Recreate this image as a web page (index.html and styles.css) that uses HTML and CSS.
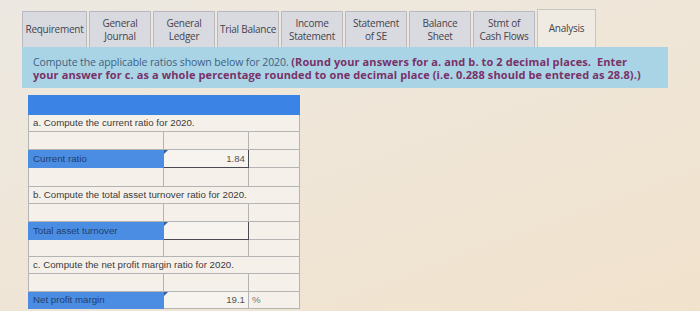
FILE: index.html
```html
<!DOCTYPE html>
<html>
<head>
<meta charset="utf-8">
<link rel="stylesheet" href="styles.css">
</head>
<body>
<div class="page">
  <div class="tabs">
    <div class="tab tab-first">Requirement</div>
    <div class="tab">General<br>Journal</div>
    <div class="tab">General<br>Ledger</div>
    <div class="tab">Trial Balance</div>
    <div class="tab">Income<br>Statement</div>
    <div class="tab">Statement<br>of SE</div>
    <div class="tab">Balance<br>Sheet</div>
    <div class="tab">Stmt of<br>Cash Flows</div>
    <div class="tab tab-active">Analysis</div>
  </div>
  <div class="instructions">
    <p class="line">Compute the applicable ratios shown below for 2020. <b>(Round your answers for a. and b. to 2 decimal places.&nbsp; Enter</b></p>
    <p class="line"><b>your answer for c. as a whole percentage rounded to one decimal place (i.e. 0.288 should be entered as 28.8).)</b></p>
  </div>
  <table class="ratios">
    <colgroup><col class="c1"><col class="c2"><col class="c3"></colgroup>
    <tr class="head"><td colspan="3"></td></tr>
    <tr class="q"><td colspan="3">a. Compute the current ratio for 2020.</td></tr>
    <tr class="blank"><td></td><td></td><td></td></tr>
    <tr class="ans"><td class="lbl">Current ratio</td><td class="val"><span class="mark"></span>1.84</td><td></td></tr>
    <tr class="blank tall"><td></td><td></td><td></td></tr>
    <tr class="q"><td colspan="3">b. Compute the total asset turnover ratio for 2020.</td></tr>
    <tr class="blank"><td></td><td></td><td></td></tr>
    <tr class="ans"><td class="lbl">Total asset turnover</td><td class="val"><span class="mark"></span></td><td></td></tr>
    <tr class="blank short"><td></td><td></td><td></td></tr>
    <tr class="q"><td colspan="3">c. Compute the net profit margin ratio for 2020.</td></tr>
    <tr class="blank"><td></td><td></td><td></td></tr>
    <tr class="ans short"><td class="lbl">Net profit margin</td><td class="val plain"><span class="mark"></span>19.1</td><td class="pct">%</td></tr>
  </table>
</div>
</body>
</html>
```
FILE: styles.css
```css
html, body {
  margin: 0;
  padding: 0;
}
body {
  width: 700px;
  height: 311px;
  overflow: hidden;
  background: linear-gradient(160deg, #ece8e1 0%, #efe6d8 45%, #f1e2cc 100%);
  font-family: "Open Sans", "DejaVu Sans", sans-serif;
}
.page {
  padding: 8px 0 0 22px;
}
.tabs {
  display: flex;
  align-items: flex-end;
  gap: 2px;
  height: 39px;
}
.tab {
  width: 60px;
  height: 35px;
  border: 1px solid #b9b9c2;
  border-bottom: none;
  background: #d9d9e0;
  color: #44444e;
  font-size: 10px;
  line-height: 13px;
  display: flex;
  align-items: center;
  justify-content: center;
  text-align: center;
  letter-spacing: -0.25px;
  white-space: nowrap;
}
.tab-first {
  width: 63px;
}
.tab-active {
  height: 37px;
  background: #efebe3;
  border-color: #c9c5bd;
  width: 57px;
}
.instructions {
  width: 646px;
  height: 41px;
  box-sizing: border-box;
  padding: 8px 6px 0 11px;
  background: #a9d4e5;
  color: #3e6184;
  font-size: 10.5px;
  letter-spacing: -0.1px;
}
.line {
  margin: 0;
  height: 13px;
  line-height: 13px;
  white-space: nowrap;
}
.instructions b {
  color: #7a3168;
  font-weight: bold;
  font-size: 11px;
  letter-spacing: 0.1px;
}
.ratios {
  margin: 7px 0 0 6px;
  width: 271px;
  border-collapse: collapse;
  table-layout: fixed;
  background: #f5f1ea;
  font-family: "Liberation Sans", Arial, sans-serif;
  font-size: 9.7px;
  color: #3a3a3a;
}
.ratios col.c1 { width: 135px; }
.ratios col.c2 { width: 85px; }
.ratios col.c3 { width: 51px; }
.ratios td {
  border: 1px solid #b4b4b4;
  padding: 0 0 0 4px;
  height: 16px;
  line-height: 12px;
  white-space: nowrap;
  overflow: hidden;
}
.ratios tr.head td {
  background: #3b83e4;
  border-color: #3b83e4;
  height: 18px;
}
.ratios tr.blank td { height: 17px; }
.ratios tr.blank.tall td { height: 18px; }
.ratios tr.blank.short td { height: 16px; }
.ratios tr.ans td { height: 17px; }
.ratios tr.ans.short td { height: 16px; }
.ratios td.lbl {
  background: #4a8de2;
  border-color: #4a8de2;
  color: #22406e;
}
.ratios td.val {
  position: relative;
  text-align: right;
  padding-right: 3px;
  border: 1px solid #4a4a52;
  background: #f7f4ef;
  color: #555;
}
.ratios td.val.plain {
  border-color: #b4b4b4;
}
.ratios td.pct {
  color: #777;
  padding-left: 3px;
}
.mark {
  position: absolute;
  left: 0;
  top: 0;
  width: 0;
  height: 0;
  border-top: 4px solid #2c5fa8;
  border-right: 4px solid transparent;
}
```
